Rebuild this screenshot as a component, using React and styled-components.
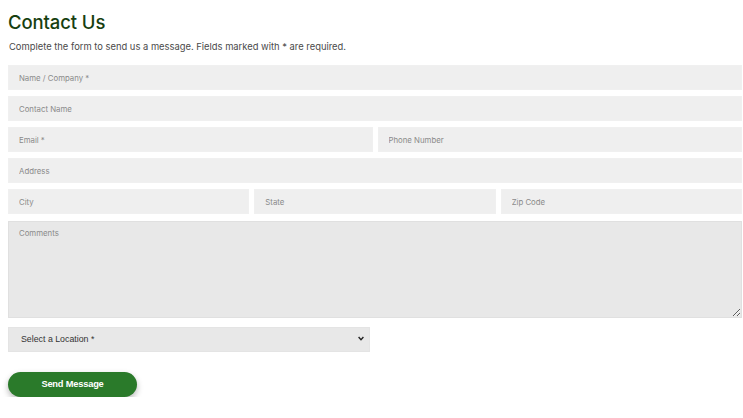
import React from "react";
import styled, { createGlobalStyle } from "styled-components";

const GlobalStyle = createGlobalStyle`
  body {
    margin: 0;
    background: #ffffff;
    font-family: Inter, "Liberation Sans", sans-serif;
  }
`;

const Page = styled.div`
  padding: 9px 1px 0 8px;
`;

const Title = styled.h1`
  margin: 0;
  font-size: 18.5px;
  line-height: 26px;
  font-weight: 500;
  letter-spacing: -0.1px;
  color: #173f10;
`;

const Intro = styled.p`
  margin: 4px 0 0 1px;
  font-size: 9.4px;
  line-height: 16px;
  color: #4a4a4a;
`;

const Form = styled.form`
  margin-top: 10px;
  display: flex;
  flex-direction: column;
  gap: 6px;
`;

const Row = styled.div`
  display: grid;
  grid-template-columns: repeat(${(p) => p.cols || 1}, 1fr);
  gap: 5px;
`;

const Field = styled.input`
  box-sizing: border-box;
  width: 100%;
  height: 25px;
  border: 1px solid #f0f0f0;
  background: #efefef;
  padding: 0 10px;
  font-family: Inter, "Liberation Sans", sans-serif;
  font-size: 7.8px;
  color: #333;
  outline: none;
  &::placeholder {
    color: #8a8a8a;
  }
`;

const Comments = styled.textarea`
  box-sizing: border-box;
  width: 100%;
  height: 97px;
  margin-top: 1px;
  border: 1px solid #e0e0e0;
  background: #e8e8e8;
  padding: 6px 10px;
  font-family: Inter, "Liberation Sans", sans-serif;
  font-size: 7.8px;
  outline: none;
  resize: vertical;
  display: block;
  &::placeholder {
    color: #8a8a8a;
  }
`;

const SelectWrap = styled.div`
  position: relative;
  width: 362px;
  margin-top: 2px;
`;

const Select = styled.select`
  box-sizing: border-box;
  width: 100%;
  height: 25px;
  border: 1px solid #e4e4e4;
  background: #e8e8e8;
  padding: 0 12px;
  appearance: none;
  font-family: "Liberation Sans", Arial, sans-serif;
  font-size: 8.8px;
  color: #333;
  outline: none;
`;

const Chevron = styled.svg`
  position: absolute;
  right: 6px;
  top: 10px;
  width: 6px;
  height: 5px;
  pointer-events: none;
`;

const SendButton = styled.button`
  margin-top: 14px;
  align-self: flex-start;
  width: 129px;
  height: 25px;
  border: none;
  border-radius: 13px;
  background: #2a7a2a;
  color: #fff;
  font-family: "Liberation Sans", Arial, sans-serif;
  font-weight: 700;
  font-size: 9.3px;
  letter-spacing: -0.2px;
  box-shadow: 0 3px 6px rgba(0, 0, 0, 0.28);
  cursor: pointer;
`;

function App() {
  return (
    <Page>
      <GlobalStyle />
      <Title>Contact Us</Title>
      <Intro>
        Complete the form to send us a message. Fields marked with * are
        required.
      </Intro>
      <Form onSubmit={(e) => e.preventDefault()}>
        <Row>
          <Field placeholder="Name / Company *" />
        </Row>
        <Row>
          <Field placeholder="Contact Name" />
        </Row>
        <Row cols={2}>
          <Field placeholder="Email *" />
          <Field placeholder="Phone Number" />
        </Row>
        <Row>
          <Field placeholder="Address" />
        </Row>
        <Row cols={3}>
          <Field placeholder="City" />
          <Field placeholder="State" />
          <Field placeholder="Zip Code" />
        </Row>
        <Row>
          <Comments placeholder="Comments" />
        </Row>
        <SelectWrap>
          <Select defaultValue="">
            <option value="">Select a Location *</option>
          </Select>
          <Chevron viewBox="0 0 6 5">
            <path d="M0.6 1 L3 3.6 L5.4 1" fill="none" stroke="#222" strokeWidth="1.4" />
          </Chevron>
        </SelectWrap>
        <SendButton type="submit">Send Message</SendButton>
      </Form>
    </Page>
  );
}

export default App;
